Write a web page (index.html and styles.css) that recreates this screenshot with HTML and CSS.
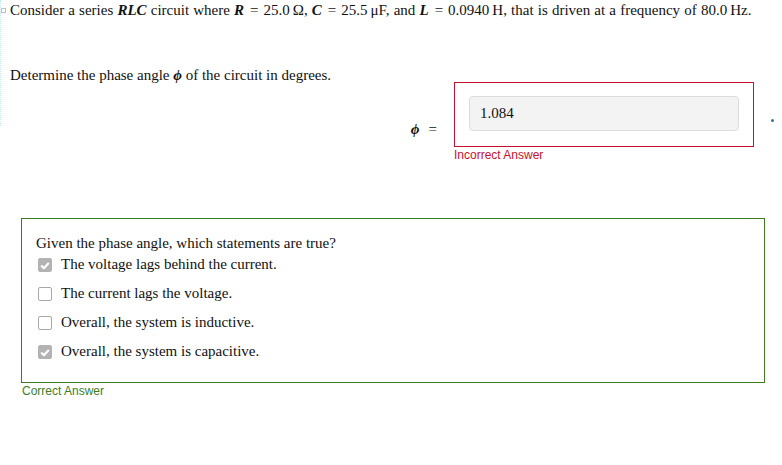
FILE: index.html
```html
<!DOCTYPE html>
<html>
<head>
<meta charset="utf-8">
<link rel="stylesheet" href="styles.css">
</head>
<body>
<div class="page">
  <div class="rail"></div>
  <p class="q first"><span class="bullet"></span>Consider a series <b class="m">RLC</b> circuit where <b class="m">R</b><span class="eq">=</span>25.0&#8201;Ω, <b class="m">C</b><span class="eq">=</span>25.5&#8201;μF, and <b class="m">L</b><span class="eq">=</span>0.0940&#8201;H, that is driven at a frequency of 80.0&#8201;Hz.</p>
  <p class="q second">Determine the phase angle <b class="m">&#x3D5;</b> of the circuit in degrees.</p>
  <div class="answer-row">
    <span class="lhs"><b class="m">&#x3D5;</b><span class="eq">=</span></span>
    <div class="ans-wrap">
      <div class="ans-box bad-box"><div class="input">1.084</div></div>
      <div class="fb bad">Incorrect Answer</div>
    </div>
    <span class="deg"></span>
  </div>
  <div class="mc">
    <div class="mc-title">Given the phase angle, which statements are true?</div>
    <div class="opt"><span class="cb checked"><svg viewBox="0 0 14 14" width="14" height="14"><path d="M3.2 7.2 L5.8 9.6 L10.8 4.2" fill="none" stroke="#fff" stroke-width="2.6" stroke-linecap="round" stroke-linejoin="round"/></svg></span><span>The voltage lags behind the current.</span></div>
    <div class="opt"><span class="cb"></span><span>The current lags the voltage.</span></div>
    <div class="opt"><span class="cb"></span><span>Overall, the system is inductive.</span></div>
    <div class="opt"><span class="cb checked"><svg viewBox="0 0 14 14" width="14" height="14"><path d="M3.2 7.2 L5.8 9.6 L10.8 4.2" fill="none" stroke="#fff" stroke-width="2.6" stroke-linecap="round" stroke-linejoin="round"/></svg></span><span>Overall, the system is capacitive.</span></div>
  </div>
  <div class="fb good">Correct Answer</div>
</div>
</body>
</html>
```
FILE: styles.css
```css
html, body {
  margin: 0;
  padding: 0;
  background: #fff;
}
body {
  font-family: "Liberation Serif", "Times New Roman", serif;
  font-size: 15px;
  color: #111;
}
.page {
  position: relative;
  width: 782px;
  height: 465px;
  overflow: hidden;
}
.rail {
  position: absolute;
  left: 0;
  top: 0;
  width: 1px;
  height: 126px;
  border-left: 1px dotted #bfe9f3;
}
.bullet {
  position: absolute;
  left: 1px;
  top: 8px;
  width: 3px;
  height: 3px;
  border: 1px solid #b8c4cc;
  background: #fff;
}
.q {
  margin: 0;
  padding-left: 10px;
  line-height: 18px;
}
.first {
  padding-top: 1px;
  word-spacing: 0.4px;
}
.second {
  margin-top: 47px;
}
.m {
  font-style: italic;
  font-weight: bold;
}
.eq {
  margin: 0 5px 0 6px;
  word-spacing: 0;
}
.answer-row {
  display: flex;
  justify-content: flex-end;
  align-items: flex-start;
  margin-top: -2px;
  padding-right: 28px;
}
.lhs {
  margin-top: 38px;
  margin-right: 12px;
  line-height: 18px;
}
.lhs .eq {
  margin-left: 9px;
}
.ans-wrap {
  width: 300px;
}
.ans-box {
  border: 1px solid #c8102e;
  padding: 13px 14px 15px 14px;
}
.input {
  height: 33px;
  line-height: 33px;
  background: #f3f3f3;
  border: 1px solid #dcdcdc;
  border-radius: 4px;
  padding-left: 10px;
}
.deg {
  position: absolute;
  left: 771px;
  top: 119px;
  width: 3px;
  height: 3px;
  border-radius: 50%;
  background: #3a6fa0;
}
.fb {
  font-family: "Liberation Sans", Arial, sans-serif;
  font-size: 12px;
  line-height: 14px;
}
.bad {
  color: #c8102e;
  margin-top: 1px;
}
.mc {
  margin: 56px 17px 0 21px;
  border: 1px solid #3d7d1f;
  padding: 15px 14px 0 14px;
  box-sizing: border-box;
  height: 165px;
}
.mc-title {
  line-height: 18px;
  margin-bottom: -2px;
}
.opt {
  display: flex;
  align-items: center;
  height: 29px;
  margin-left: 2px;
}
.cb {
  width: 14px;
  height: 14px;
  box-sizing: border-box;
  border: 1px solid #a9a9a9;
  border-radius: 2px;
  background: #fff;
  margin-right: 9px;
  display: flex;
}
.cb.checked {
  border-color: #b3b3b3;
  background: #b3b3b3;
}
.good {
  color: #3d7d1f;
  margin-left: 22px;
  margin-top: 1px;
}
```
